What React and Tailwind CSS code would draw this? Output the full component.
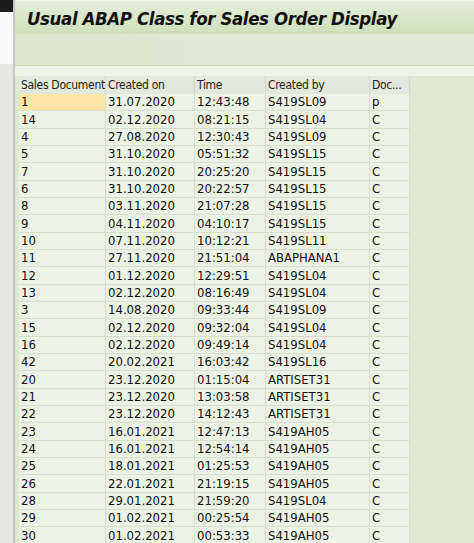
import React from "react"

const rows = [
  ["1", "31.07.2020", "12:43:48", "S419SL09", "p"],
  ["14", "02.12.2020", "08:21:15", "S419SL04", "C"],
  ["4", "27.08.2020", "12:30:43", "S419SL09", "C"],
  ["5", "31.10.2020", "05:51:32", "S419SL15", "C"],
  ["7", "31.10.2020", "20:25:20", "S419SL15", "C"],
  ["6", "31.10.2020", "20:22:57", "S419SL15", "C"],
  ["8", "03.11.2020", "21:07:28", "S419SL15", "C"],
  ["9", "04.11.2020", "04:10:17", "S419SL15", "C"],
  ["10", "07.11.2020", "10:12:21", "S419SL11", "C"],
  ["11", "27.11.2020", "21:51:04", "ABAPHANA1", "C"],
  ["12", "01.12.2020", "12:29:51", "S419SL04", "C"],
  ["13", "02.12.2020", "08:16:49", "S419SL04", "C"],
  ["3", "14.08.2020", "09:33:44", "S419SL09", "C"],
  ["15", "02.12.2020", "09:32:04", "S419SL04", "C"],
  ["16", "02.12.2020", "09:49:14", "S419SL04", "C"],
  ["42", "20.02.2021", "16:03:42", "S419SL16", "C"],
  ["20", "23.12.2020", "01:15:04", "ARTISET31", "C"],
  ["21", "23.12.2020", "13:03:58", "ARTISET31", "C"],
  ["22", "23.12.2020", "14:12:43", "ARTISET31", "C"],
  ["23", "16.01.2021", "12:47:13", "S419AH05", "C"],
  ["24", "16.01.2021", "12:54:14", "S419AH05", "C"],
  ["25", "18.01.2021", "01:25:53", "S419AH05", "C"],
  ["26", "22.01.2021", "21:19:15", "S419AH05", "C"],
  ["28", "29.01.2021", "21:59:20", "S419SL04", "C"],
  ["29", "01.02.2021", "00:25:54", "S419AH05", "C"],
  ["30", "01.02.2021", "00:53:33", "S419AH05", "C"],
]

const headers = ["Sales Document", "Created on", "Time", "Created by", "Doc..."]

const cols = "grid grid-cols-[87px_89px_71px_104px_40px]"

export default function App() {
  return (
    <div className="flex h-[543px] w-[474px] overflow-hidden bg-[#e4ecd9]">
      {/* left window strip */}
      <div className="flex w-[15px] shrink-0 flex-col border-r-2 border-[#c4c6c2]">
        <div className="h-[12px] bg-[#1c1c1c]" />
        <div className="h-[52px] bg-[#fafafa]" />
        <div className="flex-1 bg-[#e6e6e4]" />
      </div>

      <div className="flex min-w-0 flex-1 flex-col">
        <div className="flex h-[34px] shrink-0 items-center border-t border-[#eef4e6] bg-gradient-to-b from-[#e3edd8] to-[#cfe0bd] pl-[12px] pt-[2px]">
          <h1 className="whitespace-nowrap text-[18.5px] font-bold italic tracking-[-0.4px] text-[#111] [font-family:'DejaVu_Sans_Condensed','DejaVu_Sans',sans-serif]">
            Usual ABAP Class for Sales Order Display
          </h1>
        </div>

        <div className="h-[32px] shrink-0 border-b border-[#c9d5bb] bg-gradient-to-r from-[#dbe6cd] via-[#dfe8d3] to-[#dfe8d3]" />
        <div className="h-[10px] shrink-0 bg-[#eef3e7]" />

        <div className="flex-1 bg-[#dee9d1] pl-[4px] [font-family:'DejaVu_Sans_Condensed','DejaVu_Sans',sans-serif] text-[13px] text-[#111]">
          <div className={`${cols} w-max`}>
            {headers.map((h) => (
              <div
                key={h}
                className="flex h-[18px] items-center overflow-hidden whitespace-nowrap border-r border-[#d3d7cd] bg-[#e3e8dd] pl-[2px] text-[12px] tracking-[-0.3px] text-[#222]"
              >
                {h}
              </div>
            ))}
            {rows.map((r, i) =>
              r.map((c, j) => (
                <div
                  key={i + "-" + j}
                  className={`flex h-[17.33px] items-center border-r border-b border-[#d6dfcb] pl-[2px] ${
                    i === 0 && j === 0 ? "bg-[#fbe6a6]" : "bg-[#edf3e4]"
                  }`}
                >
                  {c}
                </div>
              ))
            )}
          </div>
        </div>
      </div>
    </div>
  )
}
